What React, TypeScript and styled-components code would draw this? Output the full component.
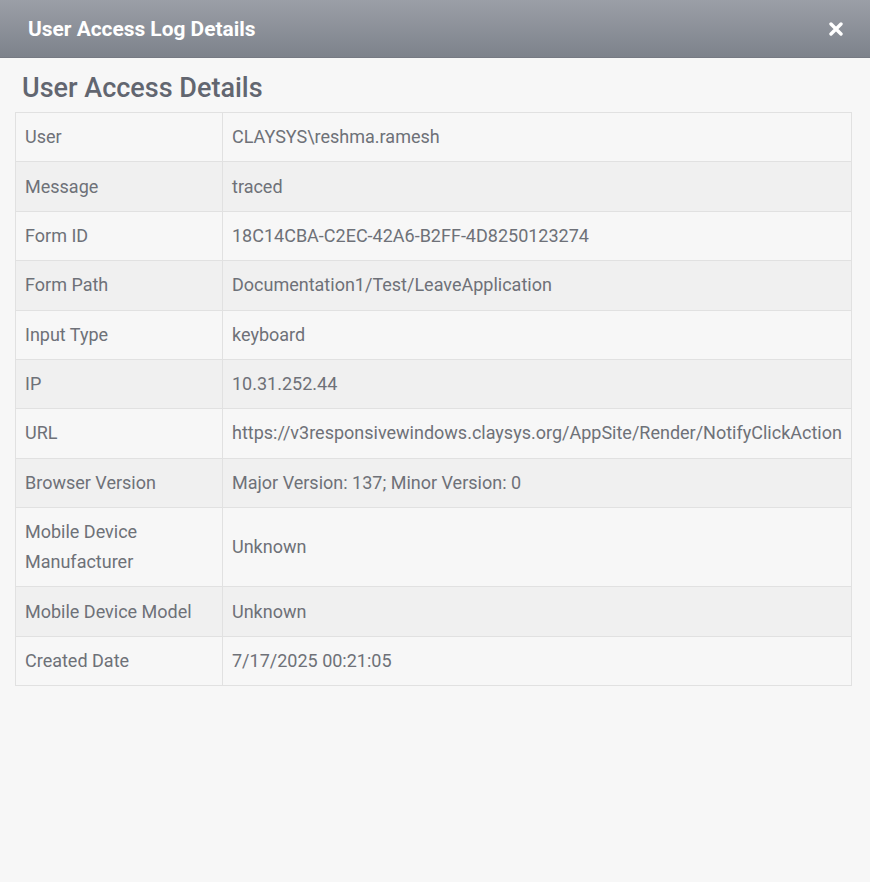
import React from 'react';
import styled, { createGlobalStyle } from 'styled-components';

/* --------------------------------- styles --------------------------------- */

const GlobalStyle = createGlobalStyle`
  html, body {
    margin: 0;
    padding: 0;
    background: #ffffff;
  }
  * {
    box-sizing: border-box;
  }
`;

const Dialog = styled.div`
  width: 870px;
  height: 882px;
  display: flex;
  flex-direction: column;
  background: #f7f7f7;
  font-family: Roboto, 'Liberation Sans', sans-serif;
`;

const TitleBar = styled.div`
  height: 58px;
  flex: 0 0 auto;
  display: flex;
  align-items: center;
  justify-content: space-between;
  padding: 0 26px 0 28px;
  background: linear-gradient(to bottom, #9b9fa7 0%, #7d828b 100%);
  border-bottom: 1px solid #767a83;
`;

const TitleText = styled.h1`
  margin: 0;
  font-size: 20.9px;
  font-weight: 700;
  color: #ffffff;
`;

const CloseButton = styled.button`
  border: none;
  background: none;
  padding: 0;
  width: 16px;
  height: 16px;
  display: flex;
  align-items: center;
  justify-content: center;
  cursor: pointer;
`;

const Body = styled.div`
  flex: 1 1 auto;
  padding: 14px 18px 0 15px;
`;

const Heading = styled.h2`
  margin: 0 0 8px 7px;
  font-size: 27px;
  line-height: 32px;
  font-weight: 500;
  color: #626670;
`;

const DetailsTable = styled.table`
  width: 100%;
  border-collapse: collapse;
  border: 1px solid #e1e1e1;
`;

const Row = styled.tr<{ $striped: boolean }>`
  background: ${({ $striped }) => ($striped ? '#f0f0f0' : '#f7f7f7')};
`;

const LabelCell = styled.td`
  width: 207px;
  border: 1px solid #e1e1e1;
  padding: 9.2px 9px;
  font-size: 18px;
  line-height: 30px;
  color: #6e7178;
  vertical-align: middle;
`;

const ValueCell = styled(LabelCell)`
  width: auto;
`;

/* ---------------------------------- data ---------------------------------- */

type Detail = {
  label: string;
  value: string;
};

const details: Detail[] = [
  { label: 'User', value: 'CLAYSYS\\reshma.ramesh' },
  { label: 'Message', value: 'traced' },
  { label: 'Form ID', value: '18C14CBA-C2EC-42A6-B2FF-4D8250123274' },
  { label: 'Form Path', value: 'Documentation1/Test/LeaveApplication' },
  { label: 'Input Type', value: 'keyboard' },
  { label: 'IP', value: '10.31.252.44' },
  { label: 'URL', value: 'https://v3responsivewindows.claysys.org/AppSite/Render/NotifyClickAction' },
  { label: 'Browser Version', value: 'Major Version: 137; Minor Version: 0' },
  { label: 'Mobile Device Manufacturer', value: 'Unknown' },
  { label: 'Mobile Device Model', value: 'Unknown' },
  { label: 'Created Date', value: '7/17/2025 00:21:05' },
];

/* -------------------------------- component ------------------------------- */

const CloseIcon = (): JSX.Element => (
  <svg width="14" height="14" viewBox="0 0 14 14">
    <path d="M2 2 L12 12 M12 2 L2 12" stroke="#ffffff" strokeWidth="3.4" strokeLinecap="round" />
  </svg>
);

const App = (): JSX.Element => {
  return (
    <>
      <GlobalStyle />
      <Dialog>
        <TitleBar>
          <TitleText>User Access Log Details</TitleText>
          <CloseButton aria-label="Close">
            <CloseIcon />
          </CloseButton>
        </TitleBar>
        <Body>
          <Heading>User Access Details</Heading>
          <DetailsTable>
            <tbody>
              {details.map((d, i) => (
                <Row key={d.label} $striped={i % 2 === 1}>
                  <LabelCell>{d.label}</LabelCell>
                  <ValueCell>{d.value}</ValueCell>
                </Row>
              ))}
            </tbody>
          </DetailsTable>
        </Body>
      </Dialog>
    </>
  );
};

export default App;
